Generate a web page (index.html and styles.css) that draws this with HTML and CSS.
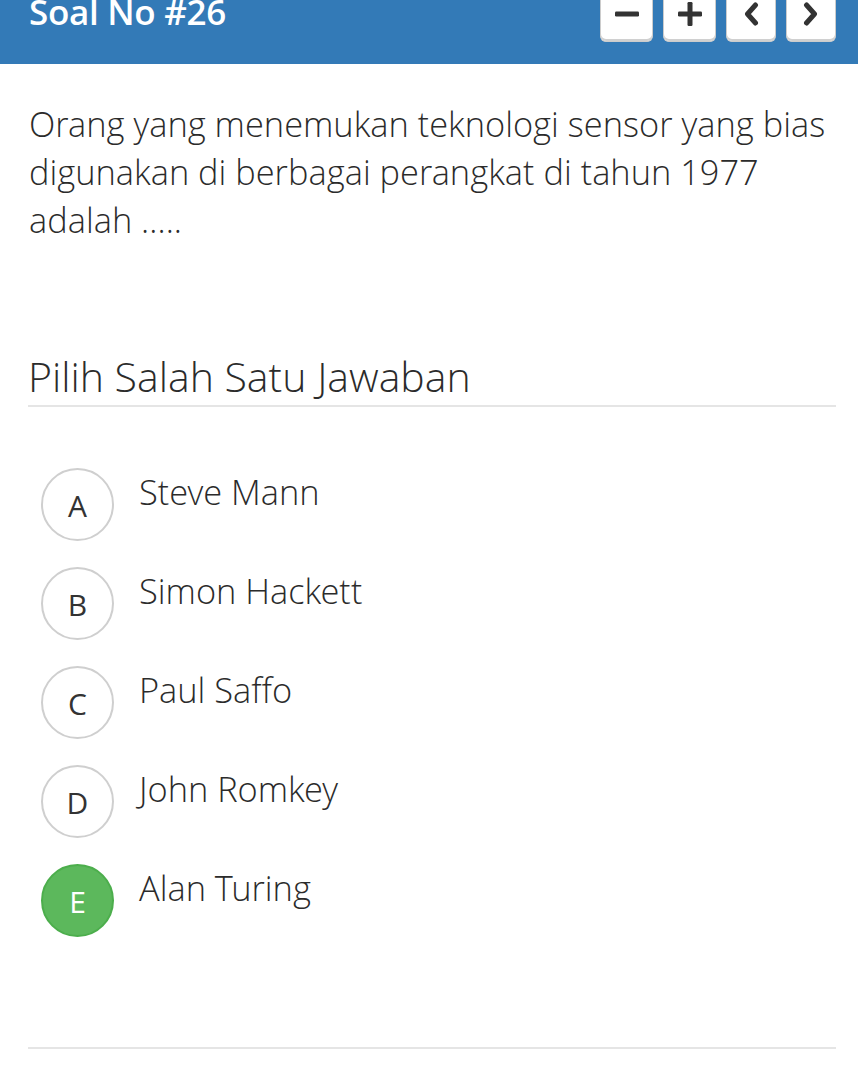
FILE: index.html
```html
<!DOCTYPE html>
<html>
<head>
<meta charset="utf-8">
<link rel="stylesheet" href="styles.css">
</head>
<body>
<div class="header">
  <div class="title">Soal No #26</div>
  <div class="tools">
    <div class="tbtn w53"><svg viewBox="0 0 24 24"><rect x="0" y="9.5" width="24" height="5" rx="1.2" fill="#333"/></svg></div>
    <div class="tbtn w53"><svg viewBox="0 0 24 24"><rect x="0" y="9.5" width="24" height="5" rx="1.2" fill="#333"/><rect x="9.5" y="0" width="5" height="24" rx="1.2" fill="#333"/></svg></div>
    <div class="tbtn w50"><svg viewBox="0 0 24 24"><path d="M16.5 3 L8.5 12 L16.5 21" fill="none" stroke="#333" stroke-width="5" stroke-linecap="round" stroke-linejoin="round"/></svg></div>
    <div class="tbtn w50"><svg viewBox="0 0 24 24"><path d="M7.5 3 L15.5 12 L7.5 21" fill="none" stroke="#333" stroke-width="5" stroke-linecap="round" stroke-linejoin="round"/></svg></div>
  </div>
</div>
<div class="content">
  <p class="question">Orang yang menemukan teknologi sensor yang bias digunakan di berbagai perangkat di tahun 1977 adalah .....</p>
  <h2 class="heading">Pilih Salah Satu Jawaban</h2>
  <div class="options">
    <div class="opt"><div class="circle">A</div><div class="otext">Steve Mann</div></div>
    <div class="opt"><div class="circle">B</div><div class="otext">Simon Hackett</div></div>
    <div class="opt"><div class="circle">C</div><div class="otext">Paul Saffo</div></div>
    <div class="opt"><div class="circle">D</div><div class="otext">John Romkey</div></div>
    <div class="opt"><div class="circle selected">E</div><div class="otext">Alan Turing</div></div>
  </div>
  <div class="bottomline"></div>
</div>
</body>
</html>
```
FILE: styles.css
```css
* { box-sizing: border-box; }
html, body { margin: 0; padding: 0; background: #fff; }
body { font-family: "Open Sans", "Liberation Sans", sans-serif; color: #222; }

.header {
  background: #337ab7;
  height: 64px;
  display: flex;
  justify-content: space-between;
  align-items: flex-start;
  padding: 0 22px 0 29px;
}
.title {
  color: #fff;
  font-size: 35px;
  font-weight: 600;
  line-height: 40px;
  margin-top: -8px;
  letter-spacing: -0.3px;
}
.tools { display: flex; gap: 10px; }
.tbtn {
  height: 42px;
  background: #fff;
  border: 1px solid #ccc;
  border-top: none;
  border-radius: 0 0 6px 6px;
  box-shadow: inset 0 -2px 0 #d0d0d0;
  display: flex;
  align-items: center;
  justify-content: center;
  padding-bottom: 14px;
}
.tbtn svg { width: 24px; height: 24px; }
.w53 { width: 53px; }
.w50 { width: 50px; }

.content { padding: 0 22px 0 29px; }
.question {
  margin: 36px 0 0 0;
  font-family: "Open Sans Light", "Open Sans", sans-serif;
  font-weight: 300;
  font-size: 34.4px;
  line-height: 48px;
  color: #2b2b2b;
}
.heading {
  margin: 105px 0 0 0;
  font-family: "Open Sans Light", "Open Sans", sans-serif;
  font-weight: 300;
  font-size: 41px;
  line-height: 54px;
  color: #2b2b2b;
  padding-bottom: 2px;
  border-bottom: 2px solid #e5e5e5;
  margin-left: -1px;
}
.options {
  margin-top: 61px;
  display: flex;
  flex-direction: column;
  gap: 26px;
  padding-left: 12px;
}
.opt { display: flex; align-items: flex-start; gap: 25px; height: 73px; }
.circle {
  width: 73px; height: 73px;
  border: 2px solid #cfcfcf;
  border-radius: 50%;
  display: flex; align-items: center; justify-content: center;
  font-size: 30px;
  font-weight: 400;
  color: #333;
  flex: none;
  padding-top: 2px;
}
.circle.selected { background: #5cb85c; border-color: #4cae4c; color: #fff; }
.otext {
  font-family: "Open Sans Light", "Open Sans", sans-serif;
  font-weight: 300;
  font-size: 34.4px;
  line-height: 46px;
  margin-top: 1px;
  color: #2b2b2b;
}
.bottomline {
  margin-top: 110px;
  border-top: 2px solid #e5e5e5;
  margin-left: -1px;
}
```
